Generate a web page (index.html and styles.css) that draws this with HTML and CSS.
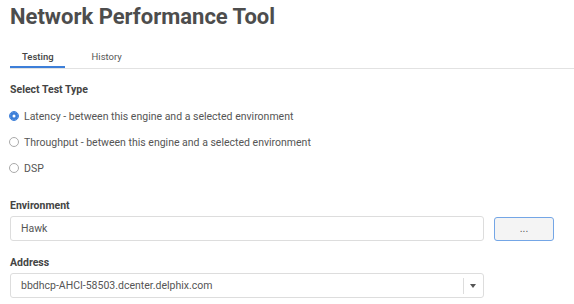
FILE: index.html
```html
<!DOCTYPE html>
<html lang="en">
<head>
	<meta charset="UTF-8">
	<title>Network Performance Tool</title>
	<link rel="stylesheet" href="styles.css">
</head>
<body>
	<h1 class="title">Network Performance Tool</h1>
	<div class="tablist">
		<button type="button" class="tab active">Testing</button>
		<button type="button" class="tab">History</button>
	</div>

	<div class="section">
		<div class="label">Select Test Type</div>
		<ul class="radios">
			<li class="radio checked"><span class="dot"></span>Latency - between this engine and a selected environment</li>
			<li class="radio"><span class="dot"></span>Throughput - between this engine and a selected environment</li>
			<li class="radio"><span class="dot"></span>DSP</li>
		</ul>
	</div>

	<div class="field">
		<div class="label">Environment</div>
		<div class="row">
			<div class="input">Hawk</div>
			<button type="button" class="more">...</button>
		</div>
	</div>

	<div class="field">
		<div class="label">Address</div>
		<div class="row">
			<div class="input select">
				<span class="value">bbdhcp-AHCI-58503.dcenter.delphix.com</span>
				<span class="arrow"></span>
			</div>
		</div>
	</div>
</body>
</html>
```

FILE: styles.css
```css
body {margin:0; padding:0 0 0 10px; font-family:Roboto, "Liberation Sans", sans-serif; color:#555; background:#fff;}
ul {list-style:none; padding:0; margin:0;}
.title {margin:2px 0 0; font-size:22px; line-height:30px; font-weight:700; color:#4d4d4d;}
.tablist {display:flex; margin-top:15px; border-bottom:1px solid #e2e2e2;}
.tab {font-family:inherit; font-size:9.5px; color:#555; background:none; border:none; border-bottom:2px solid transparent; padding:3px 11px 2px 12px; cursor:pointer; line-height:14px;}
.tab.active {font-weight:500; border-bottom-color:#3d7fd9; color:#444;}
.tab + .tab {margin-left:15px;}
.section {margin-top:14px;}
.label {font-size:10.5px; font-weight:700; color:#444; line-height:14px;}
.radios {margin-top:6px;}
.radio {display:flex; align-items:center; height:26px; font-size:10.5px;}
.dot {width:10px; height:10px; border:1px solid #aaa; border-radius:50%; box-sizing:border-box; margin:0 5px 0 -1px; flex:none;}
.radio.checked .dot {border-color:#3d7fd9; background:#fff; box-shadow:inset 0 0 0 2.5px #3d7fd9, inset 0 0 0 10px #fff;}
.field {margin-top:18px;}
.field + .field {margin-top:15px;}
.row {display:flex; align-items:center; margin-top:3px;}
.input {box-sizing:border-box; width:474px; height:25px; border:1px solid #ddd; border-radius:3px; padding:0 10px; font-size:10.5px; line-height:23px;}
.more {margin-left:10px; width:60px; height:24px; background:#f4f4f4; border:1px solid #74a6e6; border-radius:3px; font-size:10px; color:#555; cursor:pointer;}
.select {display:flex; align-items:center; padding-right:0;}
.select .value {flex:1;}
.arrow {width:19px; height:16px; border-left:1px solid #ddd; position:relative;}
.arrow::after {content:""; position:absolute; left:6px; top:6px; border:3.5px solid transparent; border-top:4px solid #555; border-bottom:none;}
```
